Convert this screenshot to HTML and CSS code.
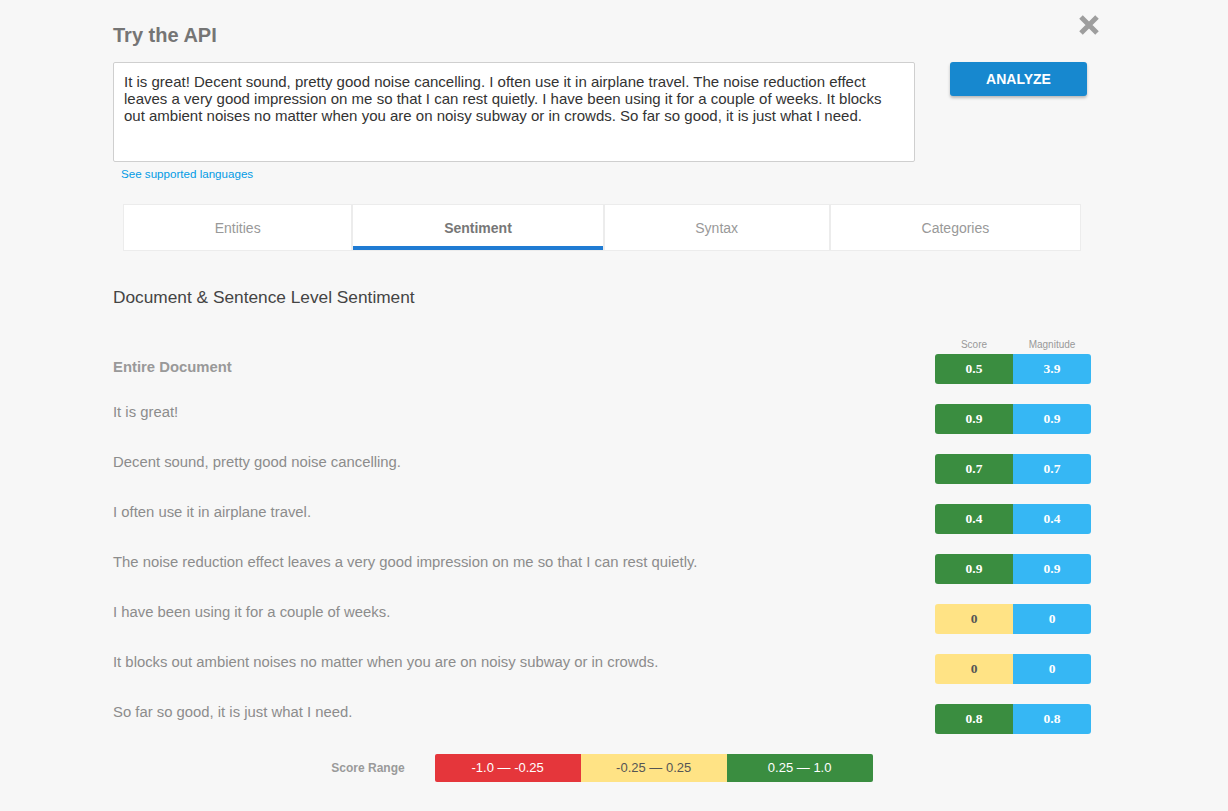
FILE: index.html
```html
<!DOCTYPE html>
<html lang="en">
<head>
  <meta charset="UTF-8" />
  <title>Try the API</title>
  <link rel="stylesheet" href="styles.css">
</head>
<body>

  <div class="panel">
    <button class="close" aria-label="Close">
      <svg width="22" height="22" viewBox="0 0 22 22">
        <path d="M3 3 L19 19 M19 3 L3 19" stroke="#9e9e9e" stroke-width="5" fill="none"/>
      </svg>
    </button>

    <h2 class="title">Try the API</h2>

    <div class="input-row">
      <div class="input-col">
        <textarea class="api-input">It is great! Decent sound, pretty good noise cancelling. I often use it in airplane travel. The noise reduction effect leaves a very good impression on me so that I can rest quietly. I have been using it for a couple of weeks. It blocks out ambient noises no matter when you are on noisy subway or in crowds. So far so good, it is just what I need.</textarea>
        <a class="lang-link" href="#">See supported languages</a>
      </div>
      <button class="analyzeBtn">ANALYZE</button>
    </div>

    <div class="tabs">
      <div class="tab">Entities</div>
      <div class="tab active">Sentiment</div>
      <div class="tab">Syntax</div>
      <div class="tab">Categories</div>
    </div>

    <h3 class="section-title">Document &amp; Sentence Level Sentiment</h3>

    <div class="col-heads">
      <span>Score</span>
      <span>Magnitude</span>
    </div>

    <div class="row doc">
      <div class="label">Entire Document</div>
      <div class="cells"><span class="cell pos">0.5</span><span class="cell mag">3.9</span></div>
    </div>
    <div class="row">
      <div class="label">It is great!</div>
      <div class="cells"><span class="cell pos">0.9</span><span class="cell mag">0.9</span></div>
    </div>
    <div class="row">
      <div class="label">Decent sound, pretty good noise cancelling.</div>
      <div class="cells"><span class="cell pos">0.7</span><span class="cell mag">0.7</span></div>
    </div>
    <div class="row">
      <div class="label">I often use it in airplane travel.</div>
      <div class="cells"><span class="cell pos">0.4</span><span class="cell mag">0.4</span></div>
    </div>
    <div class="row">
      <div class="label">The noise reduction effect leaves a very good impression on me so that I can rest quietly.</div>
      <div class="cells"><span class="cell pos">0.9</span><span class="cell mag">0.9</span></div>
    </div>
    <div class="row">
      <div class="label">I have been using it for a couple of weeks.</div>
      <div class="cells"><span class="cell neu">0</span><span class="cell mag">0</span></div>
    </div>
    <div class="row">
      <div class="label">It blocks out ambient noises no matter when you are on noisy subway or in crowds.</div>
      <div class="cells"><span class="cell neu">0</span><span class="cell mag">0</span></div>
    </div>
    <div class="row">
      <div class="label">So far so good, it is just what I need.</div>
      <div class="cells"><span class="cell pos">0.8</span><span class="cell mag">0.8</span></div>
    </div>

    <div class="range">
      <span class="range-label">Score Range</span>
      <div class="range-bar">
        <span class="neg">-1.0 — -0.25</span>
        <span class="neu">-0.25 — 0.25</span>
        <span class="pos">0.25 — 1.0</span>
      </div>
    </div>
  </div>

</body>
</html>
```

FILE: styles.css
```css
* {
  box-sizing: border-box;
}

body {
  margin: 0;
  background-color: #f7f7f7;
  font-family: "Liberation Sans", Arial, sans-serif;
  color: #333;
}

.panel {
  position: relative;
  width: 978px;
  margin-left: 113px;
  padding-top: 23px;
}

.close {
  position: absolute;
  top: 14px;
  right: -9px;
  width: 22px;
  height: 22px;
  padding: 0;
  border: none;
  background: none;
  cursor: pointer;
}

.close svg {
  display: block;
}

.title {
  margin: 0;
  font-size: 20px;
  line-height: 24px;
  color: #757575;
}

.input-row {
  display: flex;
  align-items: flex-start;
  margin-top: 15px;
}

.input-col {
  width: 802px;
}

.api-input {
  display: block;
  width: 802px;
  height: 100px;
  padding: 10px;
  border: 1px solid #cfcfcf;
  border-radius: 2px;
  background: #fff;
  font-family: "Liberation Sans", Arial, sans-serif;
  font-size: 15px;
  line-height: 17px;
  color: #333;
  resize: none;
}

.lang-link {
  display: inline-block;
  margin: 5px 0 0 8px;
  font-size: 11.6px;
  line-height: 14px;
  color: #039be5;
  text-decoration: none;
}

.analyzeBtn {
  width: 137px;
  height: 34px;
  margin-left: 35px;
  border: none;
  border-radius: 3px;
  background-color: #1788cf;
  color: white;
  font-family: "Liberation Sans", Arial, sans-serif;
  font-size: 14px;
  font-weight: bold;
  box-shadow: 0 2px 3px rgba(0, 0, 0, 0.25);
  cursor: pointer;
}

.tabs {
  display: flex;
  margin: 22px 10px 0;
}

.tab {
  flex: 1 1 auto;
  height: 47px;
  line-height: 46px;
  text-align: center;
  background: #fff;
  border: 1px solid #ececec;
  font-size: 14px;
  color: #999;
  cursor: pointer;
}

.tab.active {
  font-weight: bold;
  color: #777;
  box-shadow: inset 0 -4px 0 #1f7bd3;
}

.section-title {
  margin: 36px 0 0;
  font-size: 17.3px;
  font-weight: normal;
  line-height: 20px;
  color: #444;
}

.col-heads {
  display: flex;
  justify-content: flex-end;
  margin: 32px 0 3px;
  font-size: 10px;
  line-height: 12px;
  color: #999;
}

.col-heads span {
  width: 78px;
  text-align: center;
}

.row {
  display: flex;
  justify-content: space-between;
  align-items: flex-start;
  margin-bottom: 20px;
}

.label {
  font-size: 14.85px;
  line-height: 16px;
  color: #8c8c8c;
}

.row.doc .label {
  padding-top: 5px;
  font-weight: bold;
  color: #999;
}

.cells {
  display: flex;
  border-radius: 3px;
  overflow: hidden;
}

.cell {
  width: 78px;
  height: 30px;
  line-height: 30px;
  text-align: center;
  font-family: "Liberation Serif", "Times New Roman", serif;
  font-size: 13.5px;
  font-weight: bold;
  color: white;
}

.pos { background-color: #3a8d40; color: white; }
.neu { background-color: #ffe385; color: #555; }
.neg { background-color: #e5363b; color: white; }
.mag { background-color: #36b7f4; }

.range {
  display: flex;
  justify-content: center;
  align-items: center;
  gap: 30px;
}

.range-label {
  font-size: 12px;
  font-weight: bold;
  color: #9a9a9a;
}

.range-bar {
  display: flex;
  border-radius: 2px;
  overflow: hidden;
}

.range-bar span {
  width: 146px;
  height: 28px;
  line-height: 28px;
  text-align: center;
  font-size: 13px;
}
```
